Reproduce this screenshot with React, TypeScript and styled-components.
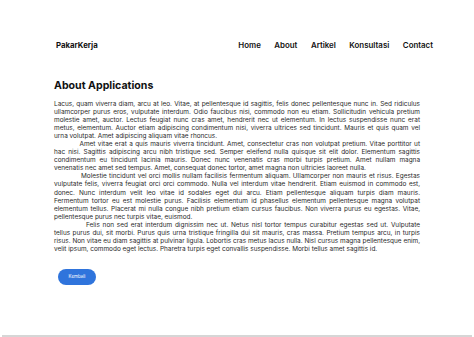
import React from "react";
import styled, { createGlobalStyle } from "styled-components";

const Global = createGlobalStyle`
  html, body { margin: 0; padding: 0; background: #ffffff; }
  body { font-family: Inter, "Noto Sans", sans-serif; color: #111; }
`;

const Page = styled.div`
  min-height: 337px;
  display: flex;
  flex-direction: column;
  box-sizing: border-box;
`;

const Header = styled.header`
  display: flex;
  align-items: center;
  justify-content: space-between;
  margin: 39px 41px 0 56px;
  height: 12px;
`;

const Logo = styled.div`
  font-size: 7.8px;
  font-weight: 700;
  color: #111;
`;

const Nav = styled.nav`
  display: flex;
  gap: 13.5px;
`;

const NavLink = styled.a`
  font-size: 7.9px;
  font-weight: 600;
  color: #111;
  text-decoration: none;
`;

const Main = styled.main`
  flex: 1;
  padding: 0 54px 0 54px;
`;

const Title = styled.h1`
  margin: 28px 0 0;
  font-size: 10.6px;
  line-height: 14px;
  font-weight: 700;
  color: #111;
`;

const Body = styled.div`
  margin-top: 7px;
  font-size: 6.45px;
  line-height: 8.05px;
  color: #2a2a2a;
  text-align: justify;
`;

const Para = styled.p<{ $indent: number }>`
  margin: 0;
  text-indent: ${(p) => p.$indent}px;
`;

const Button = styled.button`
  margin: 16px 0 0 4px;
  width: 38px;
  height: 16px;
  border: none;
  border-radius: 8px;
  background: #2f74dc;
  color: #fff;
  font-family: Inter, sans-serif;
  font-size: 4.5px;
  padding: 0;
  display: block;
`;

const ScrollBar = styled.div`
  height: 2px;
  margin: 0 2px;
  background: #d6d6d6;
`;

const paragraphs: { indent: number; text: string }[] = [
  {
    indent: 0,
    text: "Lacus, quam viverra diam, arcu at leo. Vitae, at pellentesque id sagittis, felis donec pellentesque nunc in. Sed ridiculus ullamcorper purus eros, vulputate interdum. Odio faucibus nisi, commodo non eu etiam. Sollicitudin vehicula pretium molestie amet, auctor. Lectus feugiat nunc cras amet, hendrerit nec ut elementum. In lectus suspendisse nunc erat metus, elementum. Auctor etiam adipiscing condimentum nisi, viverra ultrices sed tincidunt. Mauris et quis quam vel urna volutpat. Amet adipiscing aliquam vitae rhoncus.",
  },
  {
    indent: 25.5,
    text: "Amet vitae erat a quis mauris viverra tincidunt. Amet, consectetur cras non volutpat pretium. Vitae porttitor ut hac nisi. Sagittis adipiscing arcu nibh tristique sed. Semper eleifend nulla quisque sit elit dolor. Elementum sagittis condimentum eu tincidunt lacinia mauris. Donec nunc venenatis cras morbi turpis pretium. Amet nullam magna venenatis nec amet sed tempus. Amet, consequat donec tortor, amet magna non ultricies laoreet nulla.",
  },
  {
    indent: 27,
    text: "Molestie tincidunt vel orci mollis nullam facilisis fermentum aliquam. Ullamcorper non mauris et risus. Egestas vulputate felis, viverra feugiat orci orci commodo. Nulla vel interdum vitae hendrerit. Etiam euismod in commodo est, donec. Nunc interdum velit leo vitae id sodales eget dui arcu. Etiam pellentesque aliquam turpis diam mauris. Fermentum tortor eu est molestie purus. Facilisis elementum id phasellus elementum pellentesque magna volutpat elementum tellus. Placerat mi nulla congue nibh pretium etiam cursus faucibus. Non viverra purus eu egestas. Vitae, pellentesque purus nec turpis vitae, euismod.",
  },
  {
    indent: 32,
    text: "Felis non sed erat interdum dignissim nec ut. Netus nisl tortor tempus curabitur egestas sed ut. Vulputate tellus purus dui, sit morbi. Purus quis urna tristique fringilla dui sit mauris, cras massa. Pretium tempus arcu, in turpis risus. Non vitae eu diam sagittis at pulvinar ligula. Lobortis cras metus lacus nulla. Nisl cursus magna pellentesque enim, velit ipsum, commodo eget lectus. Pharetra turpis eget convallis suspendisse. Morbi tellus amet sagittis id.",
  },
];

export default function App() {
  return (
    <Page>
      <Global />
      <Header>
        <Logo>PakarKerja</Logo>
        <Nav>
          {["Home", "About", "Artikel", "Konsultasi", "Contact"].map((l) => (
            <NavLink key={l} href="#">
              {l}
            </NavLink>
          ))}
        </Nav>
      </Header>
      <Main>
        <Title>About Applications</Title>
        <Body>
          {paragraphs.map((p, i) => (
            <Para key={i} $indent={p.indent}>
              {p.text}
            </Para>
          ))}
        </Body>
        <Button>Kembali</Button>
      </Main>
      <ScrollBar />
    </Page>
  );
}
